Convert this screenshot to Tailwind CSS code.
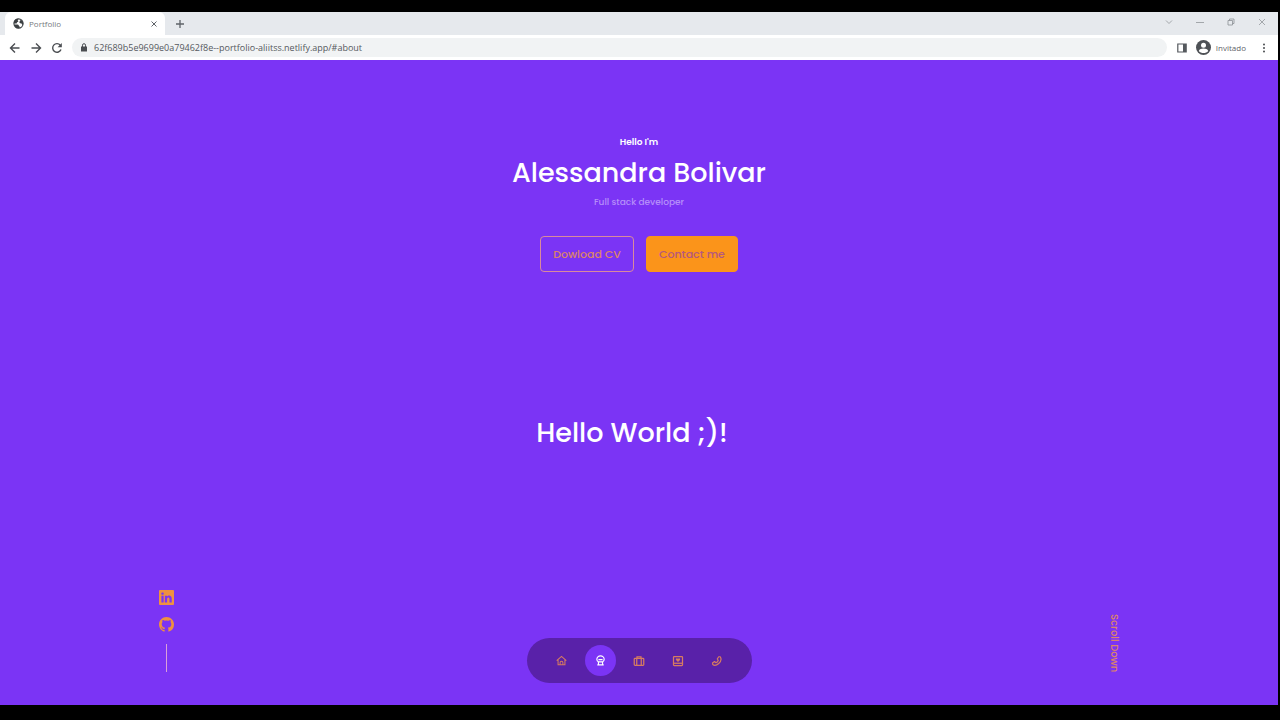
<!DOCTYPE html>
<html lang="en">
<head>
    <meta charset="UTF-8">
    <meta name="viewport" content="width=device-width, initial-scale=1.0">
    <title>Portfolio</title>
    <script src="https://cdn.jsdelivr.net/npm/@tailwindcss/browser@4"></script>
</head>
<body class="bg-black">

<div class="min-h-screen flex flex-col pt-3 pb-[15px] pr-[2px] font-['Poppins','Inter',sans-serif]">

    <!-- Browser window -->
    <header class="bg-white text-[#5f6368] font-['Open_Sans',sans-serif]">
        <!-- Tab strip -->
        <div class="h-[23px] flex items-center bg-[#e6e9ed] pl-[5px] pr-3">
            <div class="w-40 h-full flex items-center rounded-t-md bg-white pl-2 pr-[7px]">
                <svg class="w-[11px] h-[11px]" viewBox="0 0 24 24" aria-hidden="true">
                    <circle cx="12" cy="12" r="10" fill="#fff" stroke="#3c4043" stroke-width="2.4"/>
                    <path fill="#3c4043" d="M12 2c-2 1-2 3-1 4 2 1 0 3-2 3-1 0 0 3-2 3H2C1 6 6 1 12 2zM15 6c1-2 3-2 4-1 3 3 4 6 3 10-2 0-3-1-3-3-1-1-5 0-5-3 0-1 1-1 1-3zM3 14h7c2 0 3 2 3 4 3 0 2 2 1 4-6 1-11-2-11-8z"/>
                </svg>
                <span class="ml-[5px] flex-1 text-[8px] leading-3 text-[#777b80]">Portfolio</span>
                <button type="button" aria-label="Close tab">
                    <svg class="w-2 h-2" viewBox="0 0 8 8" fill="none" stroke="#5f6368"><path d="M1.5 1.5l5 5M6.5 1.5l-5 5"/></svg>
                </button>
            </div>
            <button type="button" class="ml-[10px]" aria-label="New tab">
                <svg class="w-[10px] h-[10px]" viewBox="0 0 10 10" fill="none" stroke="#5f6368" stroke-width="1.3"><path d="M5 1v8M1 5h8"/></svg>
            </button>
            <div class="ml-auto flex items-center gap-[23px] pb-1">
                <button type="button" aria-label="Search tabs">
                    <svg class="w-2 h-2" viewBox="0 0 8 8" fill="none" stroke="#9b9fa4" stroke-width=".9"><path d="M1 2.5l3 3 3-3"/></svg>
                </button>
                <button type="button" aria-label="Minimize">
                    <svg class="w-2 h-2" viewBox="0 0 8 8" fill="none" stroke="#9b9fa4" stroke-width=".9"><path d="M0 4.5h8"/></svg>
                </button>
                <button type="button" aria-label="Restore">
                    <svg class="w-2 h-2" viewBox="0 0 8 8" fill="none" stroke="#8b8f94" stroke-width=".8"><path d="M1 2.500h4.500V7H1zM2.500 2.500V1H7v4.500H5.500"/></svg>
                </button>
                <button type="button" aria-label="Close window">
                    <svg class="w-2 h-2" viewBox="0 0 8 8" fill="none" stroke="#9b9fa4" stroke-width=".9"><path d="M1 1l6 6M7 1L1 7"/></svg>
                </button>
            </div>
        </div>
        <!-- Toolbar -->
        <div class="h-[25px] flex items-center pl-[9px] pr-[9px]">
            <div class="flex items-center gap-[9px]">
                <button type="button" aria-label="Back">
                    <svg class="w-3 h-3" viewBox="0 0 12 12" fill="none" stroke="#4a4d51" stroke-width="1.4"><path d="M10.500 6H2M6 1.500L1.500 6 6 10.500"/></svg>
                </button>
                <button type="button" aria-label="Forward">
                    <svg class="w-3 h-3" viewBox="0 0 12 12" fill="none" stroke="#4a4d51" stroke-width="1.4"><path d="M1.500 6H10M6 1.500L10.500 6 6 10.500"/></svg>
                </button>
                <button type="button" aria-label="Reload">
                    <svg class="w-3 h-3" viewBox="0 0 12 12" fill="none" stroke="#4a4d51" stroke-width="1.4"><path d="M10 7.500A4.300 4.300 0 1 1 9.300 3.200"/><path fill="#4a4d51" stroke="none" d="M10.800 1v4.200H6.600z"/></svg>
                </button>
            </div>
            <div class="ml-[9px] h-[19px] flex-1 flex items-center rounded-full bg-[#f1f3f4] pl-2">
                <svg class="w-2 h-[9px]" viewBox="0 0 8 9" aria-hidden="true"><path fill="#4a4d51" d="M1 3.500h6v5H1z"/><path fill="none" stroke="#4a4d51" d="M2.500 4V2.200a1.500 1.500 0 0 1 3 0V4"/></svg>
                <input type="text" aria-label="Address" value="62f689b5e9699e0a79462f8e--portfolio-aliitss.netlify.app/#about"
                       class="ml-[6px] flex-1 bg-transparent text-[9px] leading-4 text-[#55595e] outline-none">
            </div>
            <button type="button" class="ml-[10px]" aria-label="Side panel">
                <svg class="w-[10px] h-[10px]" viewBox="0 0 10 10"><path fill="none" stroke="#55595e" stroke-width="1.200" d="M.8 1h8.400v8H.8z"/><path fill="#55595e" d="M6 1h3v8H6z"/></svg>
            </button>
            <button type="button" class="ml-[9px] flex items-center gap-[5px]">
                <svg class="w-[15px] h-[15px]" viewBox="0 0 24 24" aria-hidden="true"><circle cx="12" cy="12" r="12" fill="#4e5156"/><circle cx="12" cy="8.500" r="4" fill="#fff"/><path fill="#fff" d="M4.500 17.500c1.500-5 13.500-5 15 0-3.500 4.500-11.500 4.500-15 0z"/></svg>
                <span class="text-[8px] leading-3">Invitado</span>
            </button>
            <button type="button" class="ml-[13px]" aria-label="Menu">
                <svg class="w-[10px] h-[10px]" viewBox="0 0 10 10" fill="#4a4d51"><circle cx="5" cy="1.500" r="1"/><circle cx="5" cy="5" r="1"/><circle cx="5" cy="8.500" r="1"/></svg>
            </button>
        </div>
    </header>

    <!-- Portfolio page -->
    <main class="flex-1 flex flex-col bg-[#7b34f5] text-white text-center">
        <section class="pt-[75px]">
            <h5 class="text-[9px] leading-[14px] font-semibold">Hello I'm</h5>
            <h1 class="mt-1 text-[27px] leading-10 font-medium">Alessandra Bolivar</h1>
            <h5 class="mt-[2px] text-[9px] leading-[14px] font-medium text-white/45">Full stack developer</h5>

            <div class="mt-[27px] flex justify-center gap-3 text-[11px] leading-4 font-medium">
                <a href="#" class="rounded border border-[#d98a9b] px-3 py-[9px] text-[#dc8568]">Dowload CV</a>
                <a href="#contact" class="rounded border border-[#fb941a] bg-[#fb941a] px-3 py-[9px] text-[#b4587f]">Contact me</a>
            </div>
        </section>

        <h1 class="mt-[141px] pr-[14px] text-[27px] leading-10 font-medium">Hello World ;)!</h1>

        <div class="mt-auto grid grid-cols-[1fr_auto_1fr] items-end px-[159px] pb-[22px]">
            <!-- Socials -->
            <div class="flex flex-col items-start pb-[11px] text-[#ef913f]">
                <div class="flex flex-col items-center gap-3">
                    <a href="#" aria-label="LinkedIn">
                        <svg class="w-[15px] h-[15px]" viewBox="0 0 16 16" fill="currentColor"><path d="M0 1.146C0 .513.526 0 1.175 0h13.650C15.474 0 16 .513 16 1.146v13.708c0 .633-.526 1.146-1.175 1.146H1.175C.526 16 0 15.487 0 14.854V1.146zm4.943 12.248V6.169H2.542v7.225h2.401zm-1.200-8.212c.837 0 1.358-.554 1.358-1.248-.015-.709-.520-1.248-1.342-1.248-.822 0-1.359.540-1.359 1.248 0 .694.521 1.248 1.327 1.248h.016zm4.908 8.212V9.359c0-.216.016-.432.080-.586.173-.431.568-.878 1.232-.878.869 0 1.216.662 1.216 1.634v3.865h2.401V9.250c0-2.220-1.184-3.252-2.764-3.252-1.274 0-1.845.700-2.165 1.193v.025h-.016l.016-.025V6.169h-2.400c.030.678 0 7.225 0 7.225h2.400z"/></svg>
                    </a>
                    <a href="#" aria-label="GitHub">
                        <svg class="w-[15px] h-[15px]" viewBox="0 0 16 16" fill="currentColor"><path d="M8 0C3.580 0 0 3.580 0 8c0 3.540 2.290 6.530 5.470 7.590.4.070.55-.17.55-.38 0-.19-.01-.82-.01-1.490-2.010.37-2.530-.49-2.690-.94-.09-.23-.48-.94-.82-1.130-.28-.15-.68-.52-.01-.53.63-.01 1.080.58 1.230.82.72 1.210 1.870.87 2.330.66.07-.52.28-.87.51-1.070-1.780-.2-3.640-.89-3.640-3.950 0-.87.31-1.590.82-2.150-.08-.2-.36-1.020.08-2.120 0 0 .67-.21 2.200.82a7.600 7.600 0 0 1 4 0c1.530-1.040 2.200-.82 2.200-.82.44 1.100.16 1.920.08 2.120.51.56.82 1.270.82 2.150 0 3.070-1.870 3.750-3.650 3.950.29.25.54.73.54 1.480 0 1.070-.01 1.930-.01 2.200 0 .21.15.46.55.38A8 8 0 0 0 16 8c0-4.420-3.580-8-8-8z"/></svg>
                    </a>
                    <span class="w-px h-7 bg-[#d9a0d8]"></span>
                </div>
            </div>

            <!-- Section nav -->
            <nav class="flex items-center gap-2 rounded-full bg-[#5921a9] px-[19px] py-[7px] text-[#d77c60]">
                <a href="#" aria-label="Home" class="w-[31px] h-[31px] flex items-center justify-center rounded-full">
                    <svg class="w-[11px] h-[11px]" viewBox="0 0 24 24" fill="none" stroke="currentColor" stroke-width="2.200"><path d="M1.500 12.500L12 3l10.500 9.500M4.500 10.500v11h15v-11"/><path d="M9 21v-4.500a3 3 0 0 1 6 0V21"/></svg>
                </a>
                <a href="#about" aria-label="About" class="w-[31px] h-[31px] flex items-center justify-center rounded-full bg-[#7b34f5] text-white">
                    <svg class="w-[11px] h-[11px]" viewBox="0 0 24 24" fill="none" stroke="currentColor" stroke-width="2.500"><path d="M4 9.500a8 7.500 0 0 1 16 0c0 3-1.500 5-3.500 5.500h-9C5.500 14.500 4 12.500 4 9.500z"/><path d="M7.500 10h9M7.500 15v6.500M16.500 15v6.500M5 21.500h14"/></svg>
                </a>
                <a href="#experience" aria-label="Experience" class="w-[31px] h-[31px] flex items-center justify-center rounded-full">
                    <svg class="w-3 h-3" viewBox="0 0 24 24" fill="none" stroke="currentColor" stroke-width="2.500"><rect x="2.500" y="6.500" width="19" height="14" rx="1.500"/><path d="M7.500 6.500v14M16.500 6.500v14M8 6.500v-3h8v3"/></svg>
                </a>
                <a href="#portfolio" aria-label="Portfolio" class="w-[31px] h-[31px] flex items-center justify-center rounded-full">
                    <svg class="w-3 h-3" viewBox="0 0 24 24" fill="none" stroke="currentColor" stroke-width="2.500"><rect x="3" y="3" width="18" height="18" rx="1.500"/><path d="M3 16.500h18"/><path fill="currentColor" stroke="none" d="M12 14L8 10c-1.500-3 2-5 4-2.500 2-2.500 5.500-.5 4 2.500z"/></svg>
                </a>
                <a href="#contact" aria-label="Contact" class="w-[31px] h-[31px] flex items-center justify-center rounded-full">
                    <svg class="w-3 h-3" viewBox="0 0 24 24" fill="none" stroke="currentColor" stroke-width="2.400" stroke-linejoin="round"><path d="M15.500 3.500h3c3 5 1 10-3 13.500-4 3.500-9 4.500-12 2L3 16l4-3 3 2.500c2.500-1 4-3 4.500-5L12.500 8z"/></svg>
                </a>
            </nav>

            <a href="#contact" class="justify-self-end pb-[11px] text-[10px] leading-[10px] font-medium text-[#dc8568] [writing-mode:vertical-rl]">Scroll Down</a>
        </div>
    </main>
</div>

</body>
</html>
